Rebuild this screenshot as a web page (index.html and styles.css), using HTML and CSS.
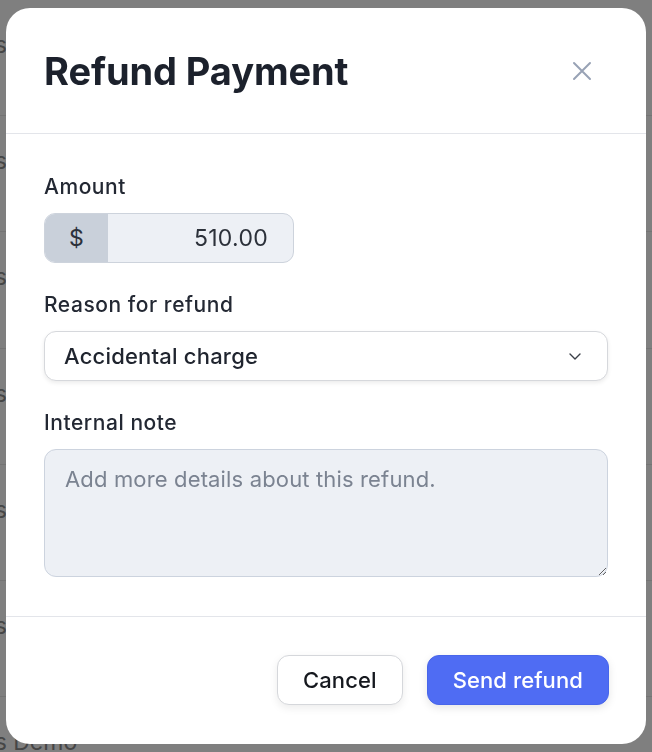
FILE: index.html
```html
<!DOCTYPE html>
<html>
<head>
    <title>Refund Payment</title>
    <link rel="stylesheet" href="styles.css">
</head>
<body>
    <div class="page">
        <div class="row"><span class="cell">Sales Demo</span></div>
        <div class="row"><span class="cell">Sales Demo</span></div>
        <div class="row"><span class="cell">Sales Demo</span></div>
        <div class="row"><span class="cell">Sales Demo</span></div>
        <div class="row"><span class="cell">Sales Demo</span></div>
        <div class="row"><span class="cell">Sales Demo</span></div>
        <div class="row"><span class="cell">Sales Demo</span></div>
    </div>

    <div class="backdrop">
        <div class="modal">
            <div class="modal-header">
                <h1>Refund Payment</h1>
                <button type="button" class="close-btn" aria-label="Close">
                    <svg width="20" height="20" viewBox="0 0 20 20" fill="none" stroke="currentColor" stroke-width="2" stroke-linecap="round">
                        <path d="M2 2 L18 18 M18 2 L2 18"/>
                    </svg>
                </button>
            </div>

            <form class="modal-body" id="refundForm">
                <div class="field">
                    <label for="amount">Amount</label>
                    <div class="amount-input">
                        <span class="prefix">$</span>
                        <input type="text" id="amount" value="510.00">
                    </div>
                </div>

                <div class="field">
                    <label for="reason">Reason for refund</label>
                    <div class="select-wrap">
                        <select id="reason">
                            <option>Accidental charge</option>
                            <option>Duplicate charge</option>
                            <option>Fraudulent charge</option>
                            <option>Failed service</option>
                        </select>
                        <svg class="chevron" width="12" height="7" viewBox="0 0 12 7" fill="none" stroke="currentColor" stroke-width="1.4" stroke-linecap="round" stroke-linejoin="round">
                            <path d="M1 1 L6 6 L11 1"/>
                        </svg>
                    </div>
                </div>

                <div class="field">
                    <label for="note">Internal note</label>
                    <textarea id="note" placeholder="Add more details about this refund."></textarea>
                </div>
            </form>

            <div class="modal-footer">
                <button type="button" class="btn btn-cancel">Cancel</button>
                <button type="button" class="btn btn-primary">Send refund</button>
            </div>
        </div>
    </div>
</body>
</html>
```

FILE: styles.css
```css
body {
    margin: 0;
    font-family: Inter, "Noto Sans", sans-serif;
    background-color: #fff;
    overflow: hidden;
}

.page {
    height: 752px;
    overflow: hidden;
}

.row {
    height: 115.2px;
    border-bottom: 1px solid #e8e8e8;
    display: flex;
}

.cell {
    margin-top: 31px;
    margin-left: -52px;
    font-size: 23px;
    color: #8c8c8c;
    white-space: nowrap;
    line-height: 28px;
}

.backdrop {
    position: fixed;
    inset: 0;
    background-color: rgba(0, 0, 0, 0.5);
    display: flex;
    align-items: center;
    justify-content: center;
}

.modal {
    width: 640px;
    height: 736px;
    background-color: #fff;
    border-radius: 24px;
    display: flex;
    flex-direction: column;
    overflow: hidden;
}

.modal-header {
    display: flex;
    align-items: center;
    justify-content: space-between;
    padding: 0 54px 0 38px;
    height: 125px;
    border-bottom: 1px solid #e3e5ea;
}

h1 {
    margin: 0;
    font-size: 38px;
    font-weight: 700;
    color: #1c212c;
    letter-spacing: -0.1px;
}

.close-btn {
    background: none;
    border: none;
    padding: 0;
    color: #98a2b5;
    cursor: pointer;
    display: flex;
}

.modal-body {
    padding: 39px 38px 39px;
    display: flex;
    flex-direction: column;
    gap: 28px;
    border-bottom: 1px solid #e3e5ea;
}

.field {
    display: flex;
    flex-direction: column;
    gap: 12px;
}

label {
    font-size: 21px;
    line-height: 28px;
    font-weight: 500;
    letter-spacing: 0.55px;
    color: #232833;
}

.amount-input {
    display: flex;
    width: 250px;
    height: 50px;
    box-sizing: border-box;
    border: 1px solid #cdd3dc;
    border-radius: 11px;
    overflow: hidden;
    background-color: #edf0f5;
}

.prefix {
    width: 63px;
    background-color: #c9d0da;
    display: flex;
    align-items: center;
    justify-content: center;
    font-size: 23px;
    color: #2c313a;
}

.amount-input input {
    flex: 1;
    min-width: 0;
    border: none;
    background: transparent;
    text-align: right;
    padding: 0 25px 0 0;
    font-family: inherit;
    font-size: 23px;
    letter-spacing: 0.3px;
    color: #2c313a;
    outline: none;
}

.select-wrap {
    position: relative;
}

select {
    width: 100%;
    height: 50px;
    appearance: none;
    border: 1px solid #d6d8dc;
    border-radius: 12px;
    background-color: #fff;
    padding: 0 19px;
    font-family: inherit;
    font-size: 22px;
    font-weight: 500;
    letter-spacing: 0.2px;
    color: #1f242e;
    box-shadow: 0 2px 4px rgba(0, 0, 0, 0.08);
    outline: none;
}

.chevron {
    position: absolute;
    right: 27px;
    top: 22px;
    color: #3a3f48;
    pointer-events: none;
}

textarea {
    height: 128px;
    box-sizing: border-box;
    border: 1px solid #ccd3de;
    border-radius: 12px;
    background-color: #edf0f5;
    padding: 14px 20px;
    font-family: inherit;
    font-size: 22px;
    line-height: 30px;
    letter-spacing: 0.15px;
    color: #2c313a;
    outline: none;
}

textarea::placeholder {
    color: #7b8391;
}

.modal-footer {
    flex: 1;
    display: flex;
    justify-content: flex-end;
    align-items: flex-start;
    gap: 24px;
    padding: 38px 37px 0;
}

.btn {
    height: 50px;
    padding: 0 25px;
    border-radius: 12px;
    font-family: inherit;
    font-size: 22px;
    font-weight: 500;
    letter-spacing: 0.1px;
    cursor: pointer;
}

.btn-cancel {
    background-color: #fff;
    border: 1px solid #d5d7db;
    color: #15181e;
    box-shadow: 0 3px 8px rgba(0, 0, 0, 0.08);
}

.btn-primary {
    background-color: #4f6cf3;
    border: 1px solid #4866ea;
    color: #fff;
    box-shadow: 0 3px 8px rgba(0, 0, 0, 0.1);
}

.btn-primary:hover {
    background-color: #4461e8;
}
```
